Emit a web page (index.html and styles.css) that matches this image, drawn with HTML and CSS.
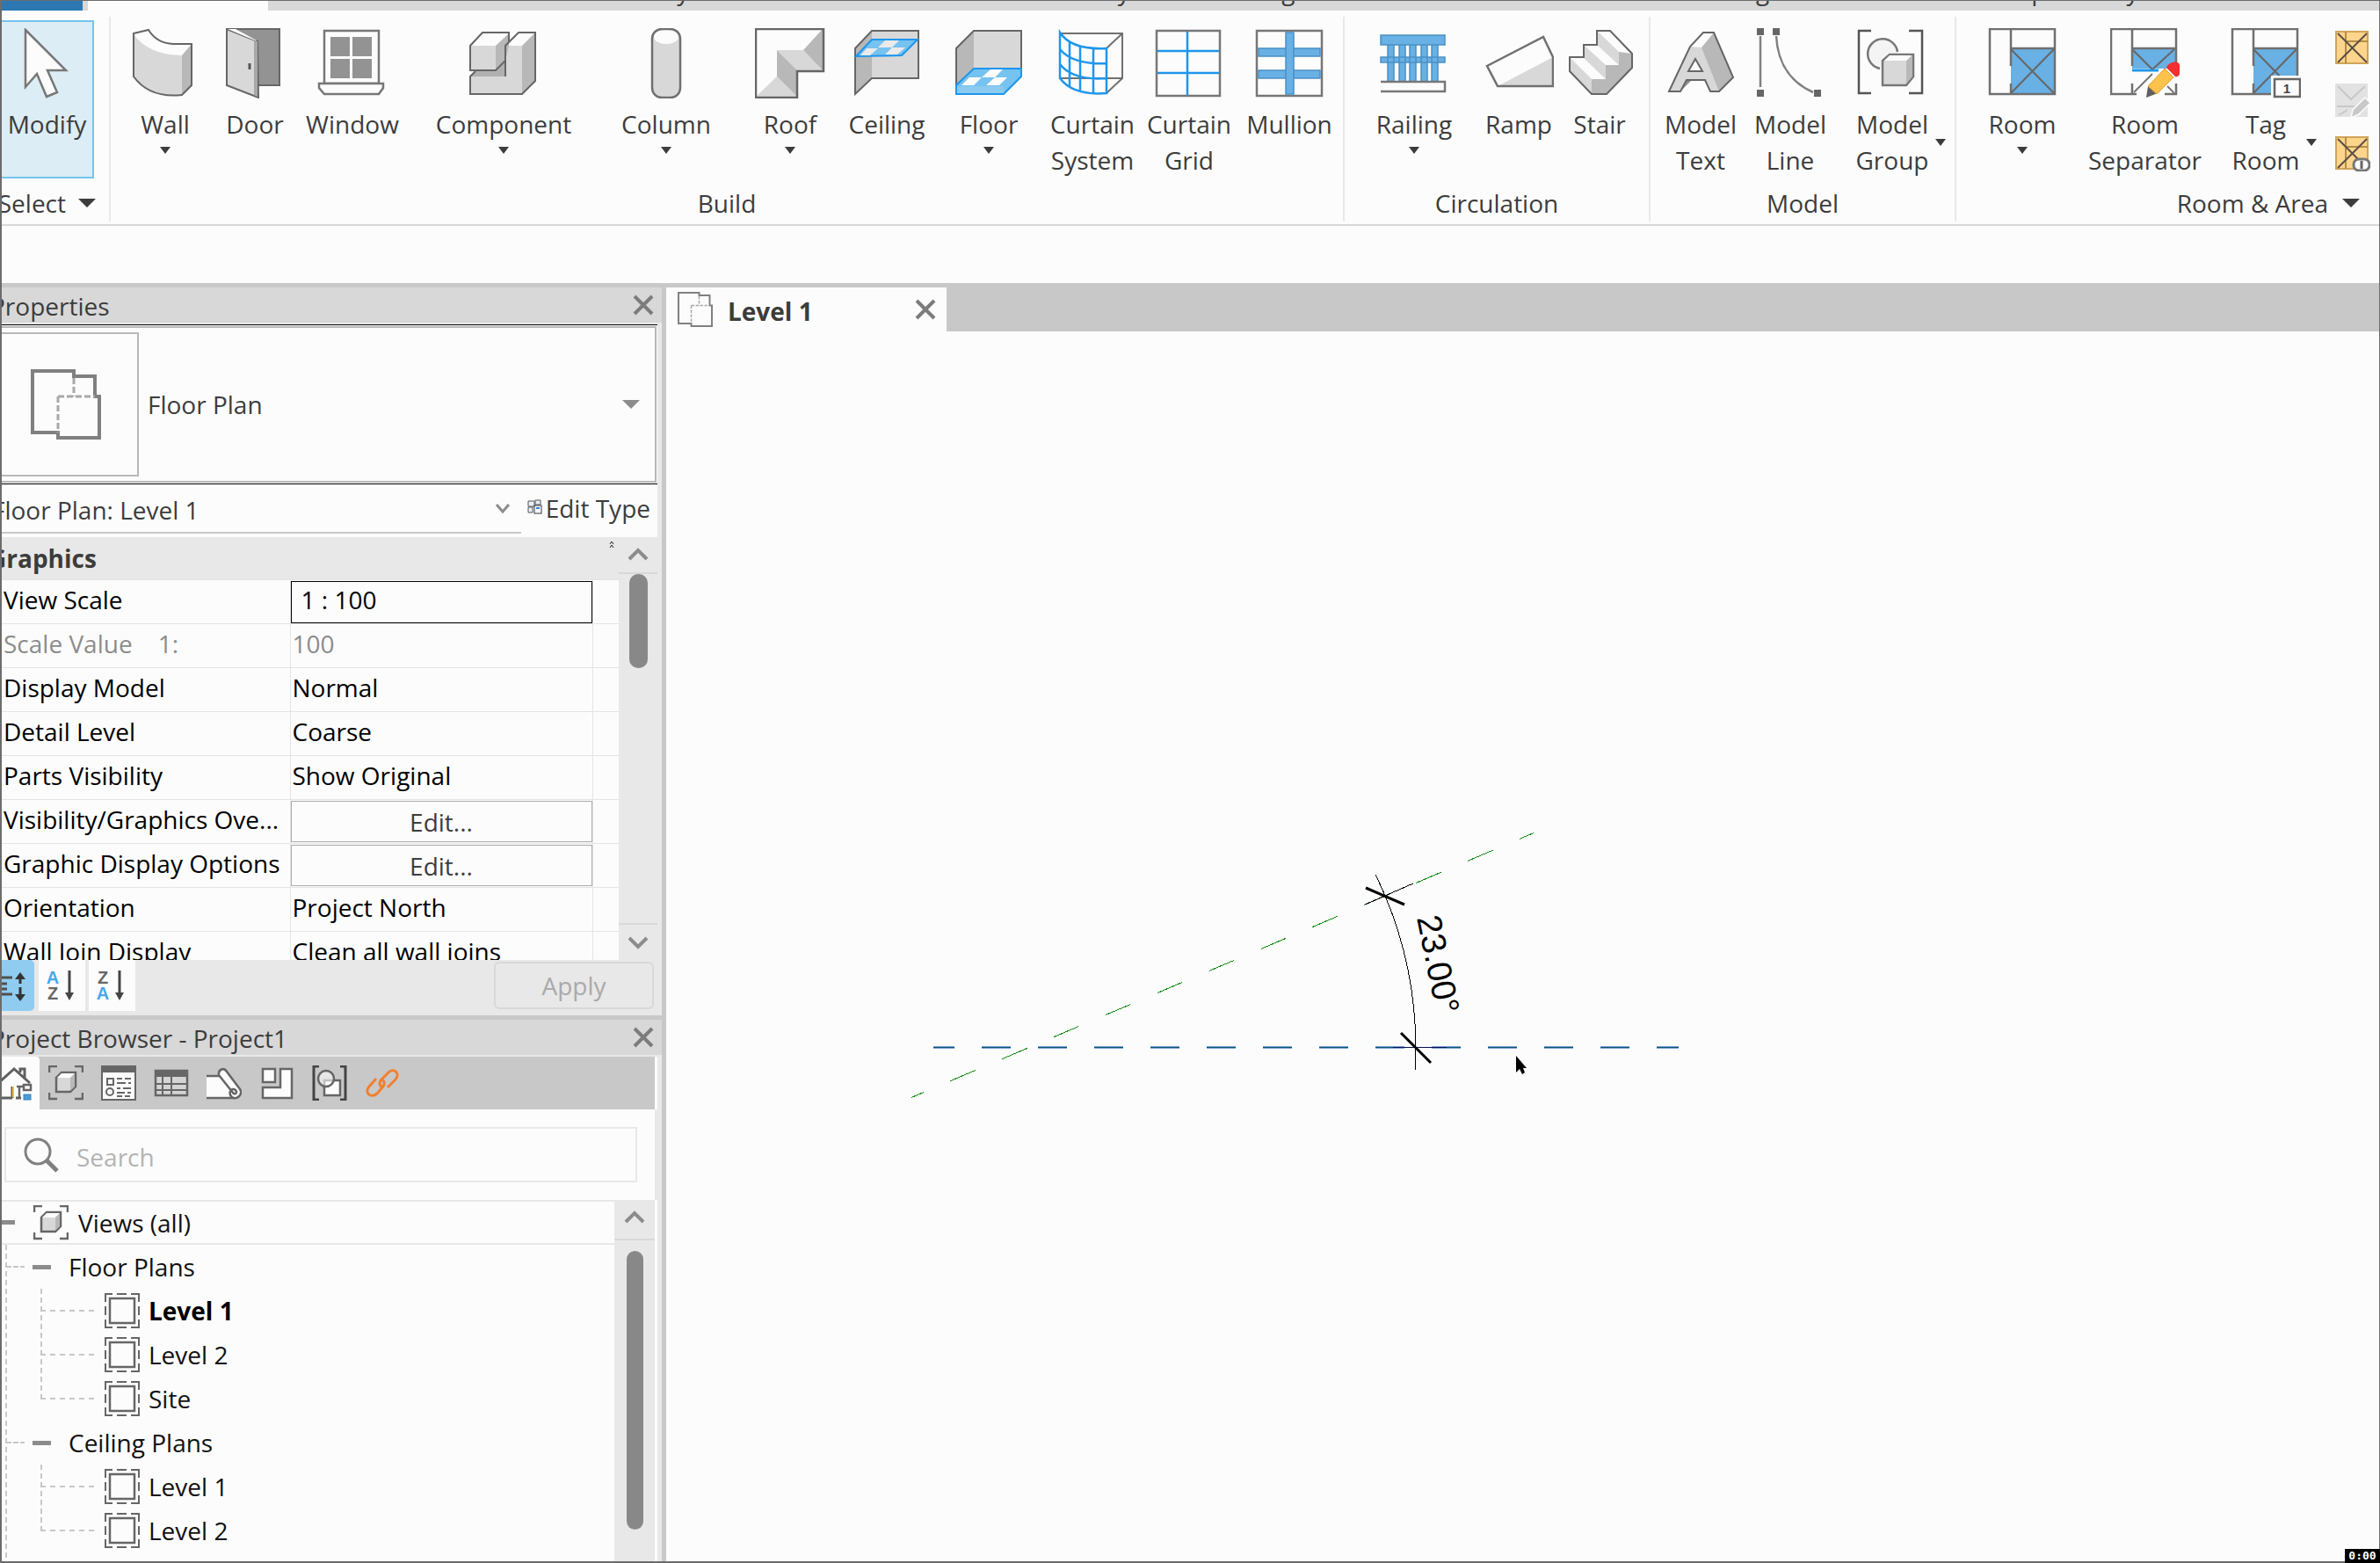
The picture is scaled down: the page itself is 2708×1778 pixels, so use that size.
FILE: index.html
```html
<!DOCTYPE html>
<html lang="en">
<head>
<meta charset="utf-8">
<meta name="viewport" content="width=device-width, initial-scale=1">
<title>Project1 - Floor Plan: Level 1</title>
<link rel="stylesheet" href="styles.css">
</head>
<body>
<svg class="symbols" width="0" height="0" aria-hidden="true">
  <symbol id="i-plan" viewBox="0 0 80 80"><path d="M2 2H49V8H73V31H78V78H31V72H2Z" fill="#fcfcfc" stroke="#808080" stroke-width="4"/><path d="M49 10V31M31 31H73M31 31V72" fill="none" stroke="#a8a8a8" stroke-width="3" stroke-dasharray="7 3"/></symbol>
  <symbol id="i-view" viewBox="0 0 40 40"><path d="M1 8V1H10M30 1H39V8M1 31V38H10M30 38H39V31" fill="none" stroke="#666" stroke-width="2.5"/><path d="M9 14L15 8H31V24L25 30H9Z" fill="#d8d8d8" stroke="#666" stroke-width="2.5"/><path d="M10 14L15 9H30L25 14Z" fill="#fcfcfc"/><path d="M25 14L30 9V24L25 29Z" fill="#b8b8b8"/></symbol>
  <symbol id="i-leaf" viewBox="0 0 40 40"><path d="M1 10V1H9M14 1H25M30 1H39V10M39 15V25M39 30V39H30M25 39H14M9 39H1V30M1 25V15" fill="none" stroke="#666" stroke-width="2"/><rect x="6" y="6" width="28" height="28" fill="#fcfcfc" stroke="#666" stroke-width="2.5"/></symbol>
  <symbol id="i-x" viewBox="0 0 24 24"><path d="M2 2L22 22M22 2L2 22" stroke="#7c7c7c" stroke-width="4" fill="none"/></symbol>
  <symbol id="i-up" viewBox="0 0 24 16"><path d="M2 13L12 3L22 13" stroke="#8c8c8c" stroke-width="4" fill="none"/></symbol>
  <symbol id="i-down" viewBox="0 0 24 16"><path d="M2 3L12 13L22 3" stroke="#8c8c8c" stroke-width="4" fill="none"/></symbol>
  <symbol id="i-tri" viewBox="0 0 12 8"><path d="M0 0H12L6 8Z" fill="#3c3c3c"/></symbol>
  <symbol id="i-tri-wide" viewBox="0 0 20 10"><path d="M0 0H20L10 10Z" fill="#3c3c3c"/></symbol>
</svg>

<div class="app">
  <nav class="tabs" aria-label="Ribbon tabs">
    <button class="tab file">File</button>
    <button class="tab current">Architecture</button>
    <button class="tab">Structure</button>
    <button class="tab">Steel</button>
    <button class="tab">Precast</button>
    <button class="tab">Systems</button>
    <button class="tab">Insert</button>
    <button class="tab">Annotate</button>
    <button class="tab">Analyze</button>
    <button class="tab">Massing &amp; Site</button>
    <button class="tab">Collaborate</button>
    <button class="tab">View</button>
    <button class="tab">Manage</button>
    <button class="tab">Add-Ins</button>
    <button class="tab">Interoperability Tools</button>
    <button class="tab">Modifier</button>
  </nav>

  <div class="ribbon">
    <section class="panel select">
      <div class="tools">
        <button class="tool active">
          <svg class="icon" viewBox="0 0 80 80"><path d="M15 2L61 48H40L51 73L39 78L28 52L15 67Z" fill="#fcfcfc" stroke="#777" stroke-width="2.5"/></svg>
          <span>Modify</span>
        </button>
      </div>
      <button class="caption">Select<svg class="tri big"><use href="#i-tri-wide"/></svg></button>
    </section>

    <section class="panel build">
      <div class="tools">
        <button class="tool">
          <svg class="icon" viewBox="0 0 80 80"><path d="M4 6L21 2Q30 17 49 18H70V65L59 76Q22 80 4 55Z" fill="#fcfcfc"/><path d="M4 7Q20 30 59 31V76Q22 80 4 55Z" fill="#d8d8d8"/><path d="M59 31L70 18V65L59 76Z" fill="#b8b8b8"/><path d="M4 6L21 2Q30 17 49 18H70V65L59 76Q22 80 4 55Z" fill="none" stroke="#666" stroke-width="2"/></svg>
          <span>Wall</span><svg class="tri"><use href="#i-tri"/></svg>
        </button>
        <button class="tool">
          <svg class="icon" viewBox="0 0 80 80"><rect x="8" y="1" width="60" height="64" fill="#939393" stroke="#666" stroke-width="2"/><path d="M8 1L43 15L44 79L8 65Z" fill="#d8d8d8" stroke="#666" stroke-width="2"/><path d="M9 1H18L42 14H40Z" fill="#fcfcfc"/><path d="M39 14L43 15V78L39 76Z" fill="#a8a8a8"/><path d="M34 40V47" stroke="#555" stroke-width="3"/></svg>
          <span>Door</span>
        </button>
        <button class="tool">
          <svg class="icon" viewBox="0 0 80 80"><rect x="8" y="3" width="62" height="60" fill="#fcfcfc" stroke="#777" stroke-width="2.5"/><path d="M15 10H37V32H15ZM40 10H62V32H40ZM15 35H37V57H15ZM40 35H62V57H40Z" fill="#939393"/><path d="M2 63H75V68L70 75H8L2 68Z" fill="#fcfcfc" stroke="#777" stroke-width="2.5"/></svg>
          <span>Window</span>
        </button>
        <button class="tool">
          <svg class="icon" viewBox="0 0 80 80"><path d="M2 20L16 5H46V18L57 5H76V60L61 75H2V55L8 49L2 48Z" fill="#fcfcfc"/><path d="M2 20H31V48H2ZM44 20H61V75H2V55H42Z" fill="#d8d8d8"/><path d="M31 20L46 6V20L42 38L31 48ZM61 20L76 5V60L61 75Z" fill="#b8b8b8"/><path d="M8 49H31L42 38V55H2Z" fill="#b0b0b0"/><path d="M42 55V20L57 5H76V60L61 75H2V55L8 49M42 37L31 48H2V20L16 5H46V16" fill="none" stroke="#666" stroke-width="2"/></svg>
          <span>Component</span><svg class="tri"><use href="#i-tri"/></svg>
        </button>
        <button class="tool">
          <svg class="icon" viewBox="0 0 80 80"><rect x="24" y="1" width="32" height="78" rx="12" fill="#d8d8d8"/><ellipse cx="40" cy="10" rx="14" ry="8" fill="#fcfcfc"/><rect x="24" y="1" width="32" height="78" rx="11" fill="none" stroke="#707070" stroke-width="2.5"/></svg>
          <span>Column</span><svg class="tri"><use href="#i-tri"/></svg>
        </button>
        <button class="tool">
          <svg class="icon" viewBox="0 0 80 80"><path d="M1 1H78V49H48V79H1Z" fill="#fcfcfc"/><path d="M25 25H55L77 48H48ZM25 55L48 78H1Z" fill="#d8d8d8"/><path d="M55 25L77 1V48ZM25 25L48 48V78L25 55Z" fill="#b8b8b8"/><path d="M1 1H78V49H48V79H1Z" fill="none" stroke="#666" stroke-width="2.5"/></svg>
          <span>Roof</span><svg class="tri"><use href="#i-tri"/></svg>
        </button>
        <button class="tool">
          <svg class="icon" viewBox="0 0 80 80"><path d="M4 23L23 3H76V57H23L4 75Z" fill="#d8d8d8"/><path d="M4 23L23 3V57L4 75Z" fill="#b8b8b8"/><path d="M4 23L23 3H76V57H23L4 75Z" fill="none" stroke="#666" stroke-width="2"/><path d="M5 32L23 13H75L57 31Z" fill="#76c2f0" stroke="#1e96ec" stroke-width="2"/><path d="M38 14H54L46 22H30ZM17 23H30L21 31H10ZM46 22H61L52 30H38Z" fill="#eaeaea"/></svg>
          <span>Ceiling</span>
        </button>
        <button class="tool">
          <svg class="icon" viewBox="0 0 80 80"><path d="M3 23L23 3H77V55L57 75H3Z" fill="#d8d8d8"/><path d="M3 23L23 3V46L3 65Z" fill="#b8b8b8"/><path d="M3 66V23L23 3H77V46" fill="none" stroke="#666" stroke-width="2"/><path d="M23 46H77V55L57 75H3V65Z" fill="#76c2f0" stroke="#1e96ec" stroke-width="2"/><path d="M42 47H56L47 56H32ZM18 56H32L23 65H9ZM47 56H61L52 65H37Z" fill="#fcfcfc"/><path d="M4 66H57V74H4Z" fill="#8ccaf0"/></svg>
          <span>Floor</span><svg class="tri"><use href="#i-tri"/></svg>
        </button>
        <button class="tool">
          <svg class="icon" viewBox="0 0 80 80"><path d="M3 6H74V57L56 74M74 6L56 23M3 57H74" fill="none" stroke="#707070" stroke-width="2"/><path d="M3 5V57Q18 77 56 74V23Q16 25 3 5ZM3 24Q18 42 56 40M3 41Q18 60 56 57M14 16V67M26 21V72M41 23V75" fill="none" stroke="#1e96ec" stroke-width="2.5"/></svg>
          <span>Curtain<br>System</span>
        </button>
        <button class="tool">
          <svg class="icon" viewBox="0 0 80 80"><rect x="3" y="3" width="72" height="74" fill="#fcfcfc" stroke="#777" stroke-width="2.5"/><path d="M38 4V76M4 26H74M4 51H74" stroke="#1e96ec" stroke-width="2.5"/></svg>
          <span>Curtain<br>Grid</span>
        </button>
        <button class="tool">
          <svg class="icon" viewBox="0 0 80 80"><rect x="3" y="3" width="74" height="74" fill="#fcfcfc" stroke="#777" stroke-width="2.5"/><path d="M5 23H75V32H5ZM5 48H75V57H5Z" fill="#69b0e4" stroke="#4a90c4" stroke-width="1.5"/><path d="M36 5H45V75H36Z" fill="#69b0e4" stroke="#4a90c4" stroke-width="1.5"/></svg>
          <span>Mullion</span>
        </button>
      </div>
      <h2 class="caption">Build</h2>
    </section>

    <section class="panel circulation">
      <div class="tools">
        <button class="tool">
          <svg class="icon" viewBox="0 0 80 80"><path d="M2 8H75V19H2ZM2 33H75V39H2ZM10 19H17V61H10ZM23 19H30V61H23ZM35 19H42V61H35ZM48 19H55V61H48ZM60 19H67V61H60Z" fill="#69b0e4" stroke="#4a90c4" stroke-width="1.5"/><path d="M2 61H75V72H2" fill="#fcfcfc" stroke="#777" stroke-width="2.5"/></svg>
          <span>Railing</span><svg class="tri"><use href="#i-tri"/></svg>
        </button>
        <button class="tool">
          <svg class="icon" viewBox="0 0 80 80"><path d="M4 43L68 10L79 33V66H16Z" fill="#fcfcfc"/><path d="M16 66L79 33V66Z" fill="#d8d8d8"/><path d="M4 43L68 10L79 33V66H16Z" fill="none" stroke="#707070" stroke-width="2.5"/></svg>
          <span>Ramp</span>
        </button>
        <button class="tool">
          <svg class="icon" viewBox="0 0 80 80"><path d="M37 3H52L77 29V45L48 75H31L6 49V33H22V19H37Z" fill="#fcfcfc"/><path d="M37 3L62 27V42L37 19ZM22 19L47 42V58L22 34ZM6 33L31 58V75L6 49Z" fill="#d8d8d8"/><path d="M31 58H47V42H62V27L77 29V45L48 75H31Z" fill="#b8b8b8"/><path d="M37 3H52L77 29V45L48 75H31L6 49V33H22V19H37Z" fill="none" stroke="#666" stroke-width="2"/></svg>
          <span>Stair</span>
        </button>
      </div>
      <h2 class="caption">Circulation</h2>
    </section>

    <section class="panel model">
      <div class="tools">
        <button class="tool">
          <svg class="icon" viewBox="0 0 80 80"><path d="M4 72L28 21L43 5H55L77 56L61 72H51L45 59H24L17 72Z" fill="#d8d8d8"/><path d="M41 22L55 5L77 56L61 72Z" fill="#b8b8b8"/><path d="M28 21L43 5H55L41 22Z" fill="#fcfcfc"/><path d="M24 59L17 72L30 59Z" fill="#909090"/><path d="M4 72L28 21L43 5H55L77 56L61 72H51L45 59H24L17 72Z" fill="none" stroke="#666" stroke-width="2"/><path d="M34 35L26 49H42Z" fill="#fcfcfc" stroke="#666" stroke-width="2"/></svg>
          <span>Model<br>Text</span>
        </button>
        <button class="tool">
          <svg class="icon" viewBox="0 0 80 80"><path d="M6 9V67M24 9C26 45 45 64 66 73" fill="none" stroke="#808080" stroke-width="2.5"/><path d="M2 0H10V8H2ZM20 0H28V8H20ZM2 70H10V78H2ZM67 70H75V78H67Z" fill="#666"/></svg>
          <span>Model<br>Line</span>
        </button>
        <button class="tool split">
          <svg class="icon" viewBox="0 0 80 80"><path d="M16 3H2V74H16M59 3H74V74H59" fill="none" stroke="#555" stroke-width="2.5"/><path d="M26 46A17 17 0 1 1 46 27" fill="#f4f4f4" stroke="#777" stroke-width="2.5"/><path d="M29 37L37 30H64V55L56 65H29Z" fill="#d8d8d8" stroke="#777" stroke-width="2.5"/><path d="M56 37L63 31V55L56 63Z" fill="#b8b8b8"/><path d="M31 37L37 31H62L56 37Z" fill="#fcfcfc"/></svg>
          <span>Model<br>Group</span><svg class="tri"><use href="#i-tri"/></svg>
        </button>
      </div>
      <h2 class="caption">Model</h2>
    </section>

    <section class="panel room">
      <div class="tools">
        <button class="tool">
          <svg class="icon" viewBox="0 0 80 80"><rect x="3" y="1" width="74" height="74" fill="#fcfcfc"/><rect x="27" y="24" width="49" height="50" fill="#69b0e4"/><path d="M3 1H77V75H3ZM27 1V43M27 63V75M27 23H77" fill="none" stroke="#707070" stroke-width="2.5"/><path d="M27 24L76 74M76 24L27 74" stroke="#666" stroke-width="2"/></svg>
          <span>Room</span><svg class="tri"><use href="#i-tri"/></svg>
        </button>
        <button class="tool">
          <svg class="icon" viewBox="0 0 80 80"><path d="M25 24H74V46H25Z" fill="#69b0e4"/><path d="M25 24L48 47L73 24" fill="none" stroke="#666" stroke-width="2"/><path d="M75 40V1H1V75H30M25 1V43M25 63V75M25 23H75M75 63V75H62" fill="none" stroke="#707070" stroke-width="2.5"/><path d="M25 48H55" stroke="#1e96ec" stroke-width="3"/><path d="M27 73L48 52M65 66L73 74" stroke="#777" stroke-width="2"/><path d="M41 79L43 66L54 74Z" fill="#606060"/><path d="M43 66L62 46L72 56L53 75Z" fill="#fdc24c" stroke="#e0a030" stroke-width="1"/><path d="M64 45C66 38 78 36 79 42V52C78 56 74 56 73 54Z" fill="#f03030"/></svg>
          <span>Room<br>Separator</span>
        </button>
        <button class="tool split">
          <svg class="icon" viewBox="0 0 80 80"><rect x="2" y="1" width="74" height="74" fill="#fcfcfc"/><rect x="26" y="24" width="49" height="50" fill="#69b0e4"/><path d="M2 1H76V75H2ZM26 1V43M26 63V75M26 23H76" fill="none" stroke="#707070" stroke-width="2.5"/><path d="M26 24L75 74M75 24L26 74" stroke="#666" stroke-width="2"/><rect x="49" y="57" width="30" height="22" fill="#fcfcfc" stroke="#fcfcfc" stroke-width="6"/><rect x="50" y="58" width="29" height="20" fill="#fcfcfc" stroke="#666" stroke-width="2.5"/><text x="64" y="74" text-anchor="middle" class="tag-digit">1</text></svg>
          <span>Tag<br>Room</span><svg class="tri"><use href="#i-tri"/></svg>
        </button>
        <div class="stack">
          <button aria-label="Area"><svg viewBox="0 0 40 40"><rect x="1" y="1" width="36" height="36" fill="#fcd48c" stroke="#d0a458" stroke-width="2"/><path d="M12 1V37M12 12H37" stroke="#b48c48" stroke-width="2"/><path d="M3 3L36 36M36 3L3 36" stroke="#5c5044" stroke-width="2"/></svg></button>
          <button aria-label="Area Boundary" disabled><svg viewBox="0 0 40 40"><rect x="0" y="0" width="37" height="38" fill="#e2e2e2"/><path d="M3 3L18 18L34 3M2 26H22M4 36L14 30" fill="none" stroke="#c8c8c8" stroke-width="2"/><path d="M18 39L20 30L34 16L40 22L27 35Z" fill="#c8c8c8" stroke="#fcfcfc" stroke-width="1.5"/></svg></button>
          <button aria-label="Tag Area"><svg viewBox="0 0 40 40"><rect x="1" y="1" width="36" height="36" fill="#fcd48c" stroke="#d0a458" stroke-width="2"/><path d="M12 1V37M12 12H37" stroke="#b48c48" stroke-width="2"/><path d="M3 3L36 36M36 3L3 36" stroke="#5c5044" stroke-width="2"/><rect x="21" y="26" width="18" height="13" rx="6" fill="#fcfcfc" stroke="#777" stroke-width="3"/><path d="M30 28V37" stroke="#666" stroke-width="3"/></svg></button>
        </div>
      </div>
      <button class="caption">Room &amp; Area<svg class="tri big"><use href="#i-tri-wide"/></svg></button>
    </section>
  </div>

  <div class="options-bar"></div>

  <div class="workspace">
    <aside class="dock">
      <section class="properties">
        <header class="dock-head"><h2>Properties</h2><button class="close" aria-label="Close properties"><svg><use href="#i-x"/></svg></button></header>
        <div class="type-frame">
          <div class="type-picker">
            <span class="thumb"><svg class="icon"><use href="#i-plan"/></svg></span>
            <select aria-label="Type"><option>Floor Plan</option></select>
            <svg class="pick-tri" viewBox="0 0 20 10"><path d="M0 0H20L10 10Z" fill="#8c8c8c"/></svg>
          </div>
        </div>
        <div class="filter-row">
          <div class="filter"><select aria-label="Properties filter"><option>Floor Plan: Level 1</option></select><svg class="chev" viewBox="0 0 18 12"><path d="M2 2L9 10L16 2" fill="none" stroke="#8c8c8c" stroke-width="3"/></svg></div>
          <button class="edit-type"><svg viewBox="0 0 17 17"><path d="M1 2H8V8H1ZM9 1H15V6H9ZM1 9H6V15H1Z" fill="#e8f0fa" stroke="#555" /><rect x="8" y="7" width="8" height="9" fill="#fcfcfc" stroke="#334"/><path d="M10 9H14V11H10Z" fill="#2f80d0"/></svg>Edit Type</button>
        </div>
        <div class="grid-area">
          <div class="grid">
            <div class="group"><h3>Graphics</h3><svg viewBox="0 0 6 10"><path d="M1 4L3 1L5 4M1 8L3 5L5 8" fill="none" stroke="#222"/></svg></div>
            <table>
              <tr><th scope="row"><label for="scale">View Scale</label></th><td class="field"><input id="scale" type="text" value="1 : 100"></td><td></td></tr>
              <tr class="off"><th scope="row">Scale Value&nbsp;&nbsp;&nbsp; 1:</th><td>100</td><td></td></tr>
              <tr><th scope="row">Display Model</th><td>Normal</td><td></td></tr>
              <tr><th scope="row">Detail Level</th><td>Coarse</td><td></td></tr>
              <tr><th scope="row">Parts Visibility</th><td>Show Original</td><td></td></tr>
              <tr><th scope="row">Visibility/Graphics Ove...</th><td class="field"><button>Edit...</button></td><td></td></tr>
              <tr><th scope="row">Graphic Display Options</th><td class="field"><button>Edit...</button></td><td></td></tr>
              <tr><th scope="row">Orientation</th><td>Project North</td><td></td></tr>
              <tr><th scope="row">Wall Join Display</th><td>Clean all wall joins</td><td></td></tr>
            </table>
          </div>
          <div class="scroll">
            <svg class="arrow"><use href="#i-up"/></svg>
            <div class="track"><div class="thumb-bar short"></div></div>
            <svg class="arrow"><use href="#i-down"/></svg>
          </div>
        </div>
        <footer class="prop-foot">
          <button class="sort on" aria-label="Group by category"><svg viewBox="0 0 37 56"><path d="M0 19H12M0 26H6M0 32H6M0 38H12" stroke="#505050" stroke-width="3"/><path d="M21 26V18M21 30V40" stroke="#333" stroke-width="3"/><path d="M15 21L21 13L27 21ZM15 38L21 46L27 38Z" fill="#333"/></svg></button>
          <button class="sort" aria-label="Sort ascending"><svg viewBox="0 0 53 56"><text x="16" y="26" class="az blue">A</text><text x="16" y="44" class="az">Z</text><path d="M35 11V38" stroke="#444" stroke-width="3"/><path d="M30 36H40L35 45Z" fill="#444"/></svg></button>
          <button class="sort" aria-label="Sort descending"><svg viewBox="0 0 53 56"><text x="16" y="26" class="az">Z</text><text x="16" y="44" class="az blue">A</text><path d="M35 11V38" stroke="#444" stroke-width="3"/><path d="M30 36H40L35 45Z" fill="#444"/></svg></button>
          <button class="apply" disabled>Apply</button>
        </footer>
      </section>

      <section class="browser">
        <header class="dock-head"><h2>Project Browser - Project1</h2><button class="close" aria-label="Close browser"><svg><use href="#i-x"/></svg></button></header>
        <div class="view-tabs">
          <button class="on" aria-label="All"><svg viewBox="0 0 40 40"><path d="M-6 22L14 4L32 20M21 8V4H26V14M0 37H12M12 37V24M16 37H22" fill="none" stroke="#606060" stroke-width="3"/><path d="M13 24V36" stroke="#f0c040" stroke-width="2"/><path d="M17 24H25M20 24V36M25 22H33V28H25Z" fill="none" stroke="#666" stroke-width="2.5"/><rect x="25" y="33" width="8" height="6" fill="#4a9ad8" stroke="#3a80b8"/></svg></button>
          <button aria-label="Views"><svg viewBox="0 0 40 40"><use href="#i-view"/></svg></button>
          <button aria-label="Sheets"><svg viewBox="0 0 40 40"><rect x="1" y="1" width="38" height="38" fill="#fcfcfc" stroke="#666" stroke-width="2"/><path d="M1 1H39V8H1Z" fill="#666"/><path d="M7 15H14V22H7ZM18 15H24M27 15H34M18 20H28M31 20H34M18 26H22M25 26H34M18 31H27M30 31H34M18 35H24M27 35H33" fill="none" stroke="#666" stroke-width="2"/><circle cx="10" cy="30" r="4" fill="none" stroke="#666" stroke-width="2"/></svg></button>
          <button aria-label="Schedules"><svg viewBox="0 0 40 40"><rect x="2" y="6" width="36" height="28" fill="#d4d4d4" stroke="#666" stroke-width="2.5"/><path d="M2 6H38V13H2ZM2 20H38V22H2ZM2 27H38V29H2Z" fill="#666"/><path d="M10 12V34M20 12V34" stroke="#666" stroke-width="2"/></svg></button>
          <button aria-label="Drawings"><svg viewBox="0 0 40 40"><path d="M0 12H17L28 28L36 24L39 32L34 37H0Z" fill="#fcfcfc"/><path d="M0 12H14M0 37H32" stroke="#666" stroke-width="2.5"/><path d="M14 11C13 4 20 2 23 7L38 27C42 33 34 40 29 36C24 32 28 24 33 28C36 31 32 34 30 31L14 11" fill="#fcfcfc" stroke="#666" stroke-width="2.5"/></svg></button>
          <button aria-label="Families"><svg viewBox="0 0 40 40"><path d="M4 4H18V19H4ZM24 4H37V37H4V25H24Z" fill="#fcfcfc" stroke="#666" stroke-width="2.5"/></svg></button>
          <button aria-label="Groups"><svg viewBox="0 0 40 40"><path d="M8 1H2V39H8M32 1H38V39H32" fill="none" stroke="#444" stroke-width="3"/><rect x="14" y="17" width="18" height="17" fill="#fcfcfc" stroke="#666" stroke-width="2.5"/><circle cx="16" cy="15" r="9" fill="#fcfcfc" fill-opacity=".6" stroke="#666" stroke-width="2.5"/></svg></button>
          <button aria-label="Links"><svg viewBox="0 0 40 40"><path d="M13 15L5 24C-1 31 7 38 14 32L21 24C24 19 21 16 18 16M26 25L35 16C41 9 33 2 27 8L19 16C15 20 18 25 21 24" fill="none" stroke="#f08030" stroke-width="3"/></svg></button>
        </div>
        <label class="search"><svg viewBox="0 0 40 40"><circle cx="16" cy="16" r="14" fill="none" stroke="#808080" stroke-width="3"/><path d="M26 26L38 38" stroke="#808080" stroke-width="5"/></svg><input type="search" placeholder="Search" aria-label="Search"></label>
        <div class="tree-area">
          <div class="tree">
            <div class="root"><button class="toggle" aria-label="Collapse Views"></button><svg class="node-icon"><use href="#i-view"/></svg>Views (all)</div>
            <ul class="groups">
              <li><div class="branch"><button class="toggle" aria-label="Collapse Floor Plans"></button>Floor Plans</div>
                <ul class="leaves">
                  <li class="open"><svg class="node-icon"><use href="#i-leaf"/></svg>Level 1</li>
                  <li><svg class="node-icon"><use href="#i-leaf"/></svg>Level 2</li>
                  <li><svg class="node-icon"><use href="#i-leaf"/></svg>Site</li>
                </ul></li>
              <li><div class="branch"><button class="toggle" aria-label="Collapse Ceiling Plans"></button>Ceiling Plans</div>
                <ul class="leaves">
                  <li><svg class="node-icon"><use href="#i-leaf"/></svg>Level 1</li>
                  <li><svg class="node-icon"><use href="#i-leaf"/></svg>Level 2</li>
                </ul></li>
            </ul>
          </div>
          <div class="scroll">
            <svg class="arrow"><use href="#i-up"/></svg>
            <div class="track last"><div class="thumb-bar long"></div></div>
          </div>
        </div>
      </section>
    </aside>

    <main class="document">
      <div class="doc-tabs">
        <div class="doc-tab"><svg class="doc-icon"><use href="#i-plan"/></svg><span>Level 1</span><button class="close" aria-label="Close Level 1"><svg><use href="#i-x"/></svg></button></div>
      </div>
      <svg class="canvas" role="img" aria-label="Angular dimension of 23 degrees between two reference planes">
        <g transform="translate(-758 -377)" fill="none">
          <path d="M1062 1191.5H1910" stroke="#7ca4dc" stroke-width="3" stroke-dasharray="33 31" stroke-dashoffset="9"/>
          <path d="M1062 1191.5H1910" stroke="#0c5468" stroke-width="1" stroke-dasharray="33 31" stroke-dashoffset="9"/>
          <path d="M1037 1248.5L1745 947.5" stroke="#108a10" stroke-width="1" stroke-dasharray="31 33" stroke-dashoffset="16" shape-rendering="crispEdges"/>
          <path d="M1585 1191.5H1646" stroke="#0a1050" stroke-width="1"/>
          <path d="M1553 1029L1608 1005M1565 995A440 440 0 0 1 1610 1217" stroke="#000" stroke-width="1" shape-rendering="crispEdges"/>
          <path d="M1554 1010L1598 1029M1594 1175L1628 1209" stroke="#000" stroke-width="3"/>
          <text transform="translate(1612 1044) rotate(78.5)" class="dim">23.00°</text>
          <path d="M1725 1201V1220L1729 1216L1732 1222L1735 1220L1733 1215H1737Z" fill="#000"/>
        </g>
      </svg>
    </main>
  </div>
  <span class="timer">0:00</span>
</div>
</body>
</html>
```
FILE: styles.css
```css
* { box-sizing: border-box; }

body {
  margin: 0;
  font: 28px/40px "Open Sans", "Noto Sans", sans-serif;
  color: #3c3c3c;
  background: #fcfcfc;
}

button, input, select {
  margin: 0;
  padding: 0;
  border: 0;
  border-radius: 0;
  background: none;
  font: inherit;
  color: inherit;
}

select { appearance: none; }
h2, h3 { margin: 0; font: inherit; }
ul { margin: 0; padding: 0; list-style: none; }
svg { display: block; flex: none; }
.symbols { position: absolute; }

.app {
  display: flex;
  flex-direction: column;
  height: 100vh;
  border: solid #6c6c6c;
  border-width: 1px 1px 2px 2px;
  overflow: hidden;
}

/* Ribbon tabs */
.tabs {
  display: flex;
  flex: none;
  align-items: flex-end;
  height: 11px;
  overflow: hidden;
  background: #d8d8d8;
}
.tab {
  flex: none;
  margin: 0 26px;
  padding-bottom: 4px;
  line-height: 38px;
  white-space: nowrap;
}
.tab.file { width: 92px; margin: 0; background: #2c78b4; color: #fff; }
.tab.current { width: 205px; margin: 0 -14px 0 6px; background: #fcfcfc; }

/* Ribbon */
.ribbon {
  display: flex;
  flex: none;
  padding-top: 7px;
  border-bottom: 2px solid #d8d8d8;
  overflow: hidden;
}
.panel {
  flex: none;
  display: flex;
  flex-direction: column;
  padding-bottom: 2px;
  margin-bottom: 3px;
  border-right: 2px solid #e8e8e8;
}
.tools { display: grid; height: 189px; }
.select { width: 124px; }
.build .tools { grid-template-columns: 124px 78px 146px 198px 172px 110px 110px 122px 114px 106px 122px; }
.circulation .tools { grid-template-columns: 158px 76px 112px; }
.model .tools { grid-template-columns: 114px 90px 142px; }
.room { flex: 1; border: 0; }
.room .tools { grid-template-columns: 150px 126px 152px 1fr; }

.tool {
  display: grid;
  grid-template-columns: 1fr auto 1fr;
  grid-template-rows: 80px auto auto;
  align-content: start;
  justify-items: center;
  padding-top: 13px;
  line-height: 41px;
}
.tool .icon { grid-column: 1 / 4; width: 80px; height: 80px; }
.tool span { grid-column: 2; margin-top: 9px; white-space: nowrap; }
.tool .tri { grid-column: 2; margin-top: 5px; }
.tool.split .tri { grid-column: 3; grid-row: 2; justify-self: start; align-self: center; margin: 8px 0 0 8px; }
.tool.active {
  width: 105px;
  height: 180px;
  margin-top: 4px;
  padding-top: 7px;
  border: 2px solid #76c4ee;
  border-left: 0;
  background: #dcedf5;
}
.tri { width: 12px; height: 8px; }
.tri.big { width: 20px; height: 10px; }
.tag-digit { font: bold 15px "Liberation Sans", sans-serif; fill: #444; }

.stack { display: grid; grid-template-rows: repeat(3, 60px); padding: 16px 0 0 3px; }
.stack button { width: 40px; height: 40px; }
.stack svg { width: 40px; height: 40px; }

.caption {
  display: flex;
  align-items: center;
  justify-content: center;
  height: 42px;
  padding-top: 3px;
  white-space: nowrap;
}
.select .caption { justify-content: flex-end; gap: 14px; padding-right: 15px; }
.room .caption { justify-content: flex-end; gap: 16px; padding-right: 22px; }

.options-bar { flex: none; height: 65px; }

/* Docked palettes */
.workspace {
  flex: 1;
  min-height: 0;
  display: flex;
  border-top: 5px solid #c8c8c8;
}
.dock {
  flex: none;
  width: 756px;
  display: flex;
  flex-direction: column;
  border-right: 5px solid #c8c8c8;
  background: #e8e8e8;
  color: #3c3c3c;
  overflow: hidden;
}
.dock-head {
  display: flex;
  justify-content: space-between;
  align-items: center;
  flex: none;
  height: 40px;
  padding-right: 9px;
  background: #d8d8d8;
}
.dock-head h2 { margin-left: -13px; padding-top: 2px; white-space: nowrap; }
.close { flex: none; width: 24px; height: 24px; }
.close svg { width: 24px; height: 24px; }

.properties { flex: 1; min-height: 0; display: flex; flex-direction: column; }
.type-frame {
  margin: 2px 5px 0 0;
  padding: 1px 1px 1px 0;
  border: solid #000;
  border-width: 1px 0;
  background: #fcfcfc;
}
.type-picker {
  display: flex;
  align-items: center;
  height: 178px;
  padding-right: 17px;
  border: 2px solid #b8b8b8;
  border-left: 0;
}
.thumb {
  display: flex;
  align-items: center;
  width: 156px;
  height: 164px;
  padding-left: 33px;
  border: 2px solid #b8b8b8;
  border-left: 0;
}
.thumb .icon { width: 80px; height: 80px; }
.type-picker select { flex: 1; padding-left: 10px; }
.pick-tri { width: 20px; height: 10px; }

.filter-row {
  display: flex;
  flex: none;
  justify-content: space-between;
  height: 60px;
  margin-right: 5px;
  padding-right: 8px;
  background: #fcfcfc;
}
.filter {
  display: flex;
  align-items: center;
  width: 591px;
  height: 56px;
  padding-right: 12px;
  border-bottom: 2px solid #c8c8c8;
  overflow: hidden;
}
.filter select { flex: 1; margin-left: -11px; padding-top: 3px; }
.chev { width: 18px; height: 12px; }
.edit-type { display: flex; align-items: center; gap: 4px; height: 54px; white-space: nowrap; }
.edit-type svg { width: 17px; height: 17px; margin-top: -4px; }

.grid-area { flex: 1; min-height: 0; display: flex; margin-right: 5px; }
.grid { flex: 1; overflow: hidden; }
.group { display: flex; justify-content: space-between; height: 48px; padding: 4px 5px 0 0; font-weight: 700; }
.group h3 { margin-left: -15px; }
.group svg { width: 6px; height: 10px; }

table { width: 100%; border-collapse: collapse; table-layout: fixed; background: #fcfcfc; color: #000; }
tr { height: 50px; }
th, td { padding: 0 0 6px; border: 1px solid #e4e4e4; font-weight: 400; text-align: left; white-space: nowrap; line-height: 40px; }
th { width: 328px; padding-left: 2px; border-left: 0; }
td { width: 344px; padding-left: 2px; }
td:last-child { width: auto; border-right: 0; }
td.field { padding: 0; }
td.field input { display: block; width: 100%; height: 48px; padding: 0 0 6px 11px; border: 1px solid #000; }
td.field button { display: block; width: 100%; height: 47px; border: 1px solid #acacac; color: #3c3c3c; }
tr.off { color: #8c8c8c; }

.scroll { flex: none; display: flex; flex-direction: column; align-items: center; width: 44px; padding: 12px 0; background: #e8e8e8; }
.scroll .arrow { width: 24px; height: 16px; }
.track {
  flex: 1;
  align-self: stretch;
  margin: 12px 0;
  border: solid #d8d8d8;
  border-width: 2px 0;
}
.track.last { margin: 16px 0 0; padding-top: 12px; border-bottom: 0; }
.thumb-bar { width: 21px; height: 107px; margin: 0 auto; border-radius: 10px; background: #888; }
.thumb-bar.long { width: 19px; height: 317px; }

.prop-foot { display: flex; flex: none; height: 63px; padding: 0 9px 5px 0; }
.sort { width: 53px; height: 58px; margin-right: 4px; background: #fcfcfc; }
.sort.on { width: 37px; margin-right: 5px; border-radius: 0 5px 5px 0; background: #90ccf0; }
.sort svg { height: 56px; }
.az { font: 700 20px/20px "Liberation Sans", sans-serif; text-anchor: middle; fill: #666; }
.az.blue { fill: #48a8ec; }
.apply { width: 182px; height: 54px; margin: 2px 0 0 auto; border: 2px solid #d8d8d8; border-radius: 6px; color: #aaa; }

/* Project browser */
.browser { flex: none; border-top: 5px solid #c8c8c8; }
.view-tabs { display: flex; height: 60px; margin: 2px 8px 0 0; background: #c8c8c8; box-shadow: 3px 0 #fcfcfc; }
.view-tabs button { display: flex; align-items: center; justify-content: center; width: 60px; }
.view-tabs button.on { justify-content: flex-start; width: 43px; background: #fcfcfc; border-radius: 0 4px 0 0; }
.view-tabs svg { width: 40px; height: 40px; }
.search {
  display: flex;
  align-items: center;
  height: 63px;
  margin: 20px 28px 20px 3px;
  padding-left: 20px;
  gap: 20px;
  border: 2px solid #e8e8e8;
  background: #fcfcfc;
  box-shadow: 0 0 0 20px #fcfcfc;
}
.search svg { width: 40px; height: 40px; }
.search input { flex: 1; outline: 0; padding-top: 4px; }
.search input::placeholder { color: #b4b4b4; opacity: 1; }

.tree-area { display: flex; margin-right: 5px; padding-right: 3px; background: #fcfcfc; color: #111; }
.tree { flex: 1; border-top: 2px solid #e8e8e8; }
.tree-area .scroll { width: 46px; }
.root { display: flex; align-items: center; height: 49px; border-bottom: 2px solid #e8e8e8; }
.toggle { width: 21px; height: 5px; background: #8c8c8c; }
.root .toggle { width: 15px; margin-right: 21px; }
.node-icon { width: 40px; height: 40px; }
.root .node-icon { margin-right: 11px; }
.groups {
  padding-bottom: 10px;
  background: repeating-linear-gradient(#c8c8c8 0 6px, transparent 6px 10px) 4px 0 / 2px 100% no-repeat;
}
.branch {
  display: flex;
  align-items: center;
  gap: 20px;
  height: 50px;
  padding-left: 35px;
  background: repeating-linear-gradient(90deg, #c8c8c8 0 6px, transparent 6px 8px) 5px 24px / 21px 2px no-repeat;
}
.leaves {
  background: repeating-linear-gradient(#c8c8c8 0 6px, transparent 6px 10px) 44px 0 / 2px calc(100% - 25px) no-repeat;
}
.leaves li {
  display: flex;
  align-items: center;
  gap: 10px;
  height: 50px;
  padding-left: 117px;
  background: repeating-linear-gradient(90deg, #c8c8c8 0 6px, transparent 6px 11px) 44px 24px / 62px 2px no-repeat;
}
.leaves .open { font-weight: 700; color: #000; }

/* Document window */
.document { flex: 1; min-width: 0; display: flex; flex-direction: column; }
.doc-tabs { flex: none; display: flex; height: 50px; background: #c8c8c8; }
.doc-tab {
  display: flex;
  align-items: center;
  width: 319px;
  padding: 0 12px 0 12px;
  background: #fcfcfc;
  font-weight: 700;
}
.doc-tab span { padding-top: 3px; }
.doc-icon { width: 42px; height: 40px; margin-right: 16px; }
.doc-tab .close { margin-left: auto; }
.canvas { flex: 1; width: 100%; min-height: 0; }
.dim { font: 39px "Liberation Sans", Arial, sans-serif; fill: #000; }

.timer {
  position: absolute;
  right: 0;
  bottom: 0;
  width: 40px;
  height: 16px;
  background: #000;
  color: #fff;
  font: bold 13px/16px "DejaVu Sans Mono", monospace;
  text-align: center;
}
```
